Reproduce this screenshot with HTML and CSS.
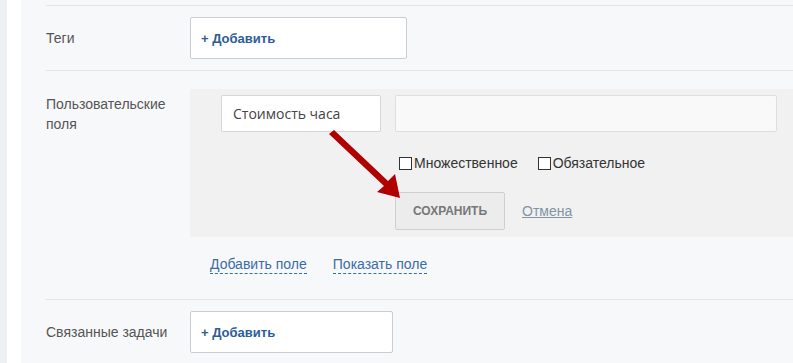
FILE: index.html
```html
<!DOCTYPE html>
<html lang="ru">
<head>
    <meta charset="UTF-8">
    <title>Поля задачи</title>
    <link rel="stylesheet" href="styles.css">
</head>

<body>
    <div class="sheet">
        <div class="panel">

            <!-- теги -->
            <div class="row">
                <div class="label">Теги</div>
                <div class="add-box"><span class="add">+ Добавить</span></div>
            </div>

            <!-- пользовательские поля -->
            <div class="row row-top">
                <div class="label label-top">Пользовательские<br>поля</div>
                <div class="fields">
                    <div class="fields-box">
                        <div class="inputs">
                            <div class="input name">Стоимость часа</div>
                            <div class="input value"></div>
                        </div>
                        <div class="options">
                            <div class="checks">
                                <label class="check"><span class="box"></span>Множественное</label>
                                <label class="check"><span class="box"></span>Обязательное</label>
                            </div>
                            <div class="actions">
                                <button class="save">СОХРАНИТЬ</button>
                                <a class="cancel">Отмена</a>
                            </div>
                        </div>
                    </div>
                    <div class="links">
                        <a class="dash">Добавить поле</a>
                        <a class="dash">Показать поле</a>
                    </div>
                </div>
            </div>

            <!-- связанные задачи -->
            <div class="row">
                <div class="label">Связанные задачи</div>
                <div class="add-box short"><span class="add">+ Добавить</span></div>
            </div>

        </div>
    </div>

    <!-- стрелка-подсказка -->
    <svg class="arrow" width="793" height="363" viewBox="0 0 793 363">
        <path d="M329 134 L334 130 L388 181 L395 174 L400 198 L377 192 L384 186 Z" fill="#b10000"/>
    </svg>
</body>
</html>
```

FILE: styles.css
```css
body {
    margin: 0;
    background: #eef0f2;
    font-family: "Liberation Sans", Arial, sans-serif;
    font-size: 14px;
    color: #555;
}
.sheet {
    margin-left: 7px;
    padding-left: 14px;
    background: #fff;
    min-height: 363px;
}
.panel {
    background: #f7f8fa;
    padding-top: 5px;
    padding-left: 25px;
    min-height: 358px;
}
.row {
    display: flex;
    align-items: center;
    border-top: 1px solid #e2e4e7;
    padding: 11px 0;
}
.row-top {
    align-items: flex-start;
    padding: 18px 0 0;
}
.label {
    width: 144px;
    flex: none;
}
.label-top {
    line-height: 20px;
    padding-top: 5px;
}
.add-box {
    box-sizing: border-box;
    width: 217px;
    height: 42px;
    background: #fff;
    border: 1px solid #c9cdd3;
    border-radius: 2px;
    display: flex;
    align-items: center;
    padding-left: 10px;
}
.add-box.short {
    width: 203px;
}
.add {
    font-weight: bold;
    font-size: 13px;
    color: #2c5d97;
}
.fields {
    flex: 1;
}
.fields-box {
    background: #f1f1f1;
    padding: 6px 16px 7px 31px;
}
.inputs {
    display: flex;
    gap: 14px;
}
.input {
    box-sizing: border-box;
    height: 37px;
    border: 1px solid #d6d6d6;
    border-radius: 2px;
    background: #fff;
}
.name {
    width: 160px;
    padding-left: 11px;
    line-height: 35px;
    font-family: "Open Sans", sans-serif;
    font-size: 14px;
    color: #444;
}
.value {
    flex: 1;
    background: #f9f9f9;
    border-color: #dedede;
}
.options {
    margin-left: 174px;
}
.checks {
    margin-top: 20px;
    padding-left: 4px;
    display: flex;
    gap: 20px;
    line-height: 22px;
    color: #333;
}
.check {
    display: flex;
    align-items: center;
}
.box {
    box-sizing: border-box;
    width: 13px;
    height: 13px;
    border: 1px solid #333;
    background: #fff;
    margin-right: 2px;
}
.actions {
    margin-top: 18px;
    display: flex;
    align-items: center;
    gap: 17px;
}
.save {
    box-sizing: border-box;
    height: 38px;
    width: 110px;
    background: #ececec;
    border: 1px solid #cfcfcf;
    border-radius: 2px;
    color: #777;
    font-family: "Liberation Sans", Arial, sans-serif;
    font-weight: bold;
    font-size: 12px;
    padding: 0;
}
.cancel {
    color: #8494a6;
    text-decoration: underline;
}
.links {
    padding: 19px 0 25px 20px;
    display: flex;
    gap: 26px;
    line-height: 20px;
}
.dash {
    color: #3b6ca4;
    border-bottom: 1px dashed #3b6ca4;
    line-height: 17px;
}
.arrow {
    position: absolute;
    left: 0;
    top: 0;
}
```
